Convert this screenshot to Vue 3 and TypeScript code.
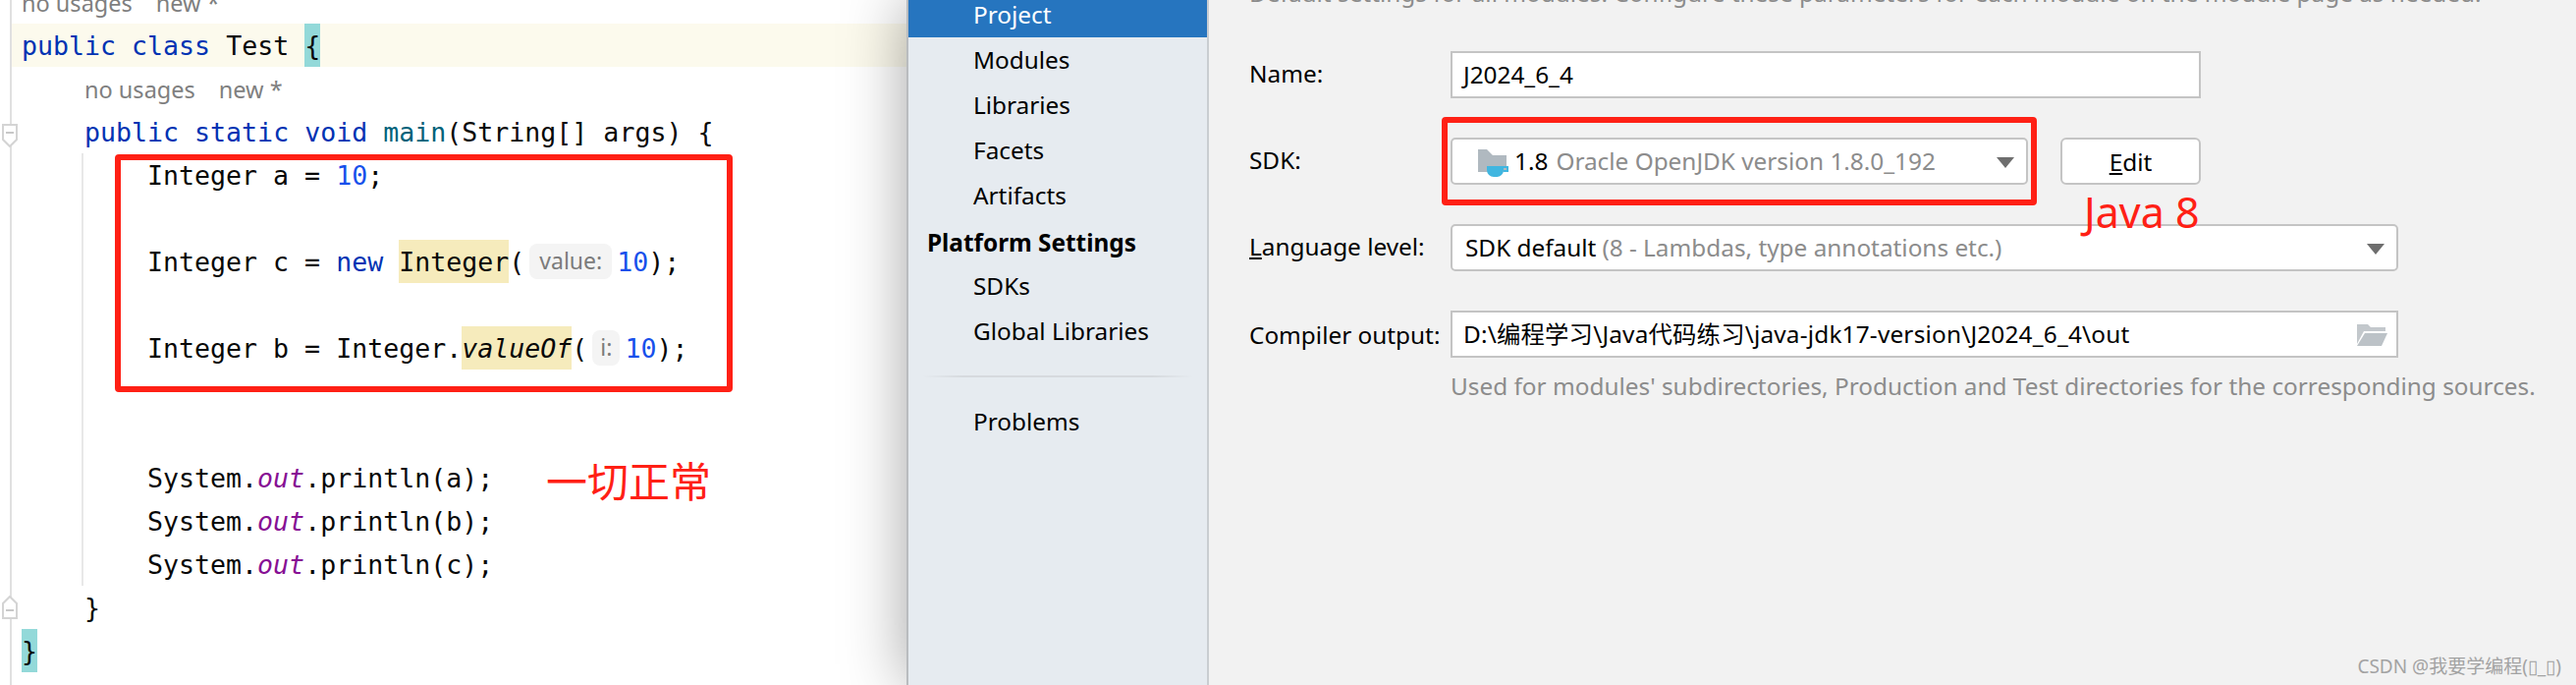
<script setup lang="ts">
const projectItems: string[] = ['Modules', 'Libraries', 'Facets', 'Artifacts']
const platformItems: string[] = ['SDKs', 'Global Libraries']
</script>

<template>
  <div class="page">
    <section class="editor">
      <div class="guide"></div>
      <div class="line hint top"><span class="i0">no usages</span><span class="new">new *</span></div>
      <div class="line caret"><span class="i0"><b class="kw">public class</b> Test <span class="brace">{</span></span></div>
      <div class="line hint"><span class="i4">no usages</span><span class="new">new *</span></div>
      <div class="line">
        <svg class="fold" width="18" height="24" viewBox="0 0 18 24"><path d="M2 1h14v15l-7 7-7-7z" fill="#fff" stroke="#d4d4d4" stroke-width="2"/><path d="M5 9h8" stroke="#c8c8c8" stroke-width="2"/></svg>
        <span class="i4"><b class="kw">public static void</b> <span class="fn">main</span>(String[] args) {</span>
      </div>
      <div class="line"><span class="i8">Integer a = <span class="num">10</span>;</span></div>
      <div class="line"></div>
      <div class="line"><span class="i8">Integer c = <b class="kw">new</b> <span class="mark">Integer</span>(<span class="inlay value">value:</span><span class="num">10</span>);</span></div>
      <div class="line"></div>
      <div class="line"><span class="i8">Integer b = Integer.<span class="mark"><i>valueOf</i></span>(<span class="inlay short">i:</span><span class="num">10</span>);</span></div>
      <div class="line"></div>
      <div class="line"></div>
      <div class="line"><span class="i8">System.<i class="field">out</i>.println(a);</span></div>
      <div class="line"><span class="i8">System.<i class="field">out</i>.println(b);</span></div>
      <div class="line"><span class="i8">System.<i class="field">out</i>.println(c);</span></div>
      <div class="line">
        <svg class="fold close" width="18" height="24" viewBox="0 0 18 24"><path d="M2 23h14V8L9 1 2 8z" fill="#fff" stroke="#d4d4d4" stroke-width="2"/><path d="M5 15h8" stroke="#c8c8c8" stroke-width="2"/></svg>
        <span class="i4">}</span>
      </div>
      <div class="line"><span class="i0"><span class="brace">}</span></span></div>
    </section>

    <section class="dialog">
      <nav class="sidebar">
        <div class="item selected">Project</div>
        <div v-for="name in projectItems" :key="name" class="item">{{ name }}</div>
        <div class="heading">Platform Settings</div>
        <div v-for="name in platformItems" :key="name" class="item">{{ name }}</div>
        <div class="separator"></div>
        <div class="item">Problems</div>
      </nav>
      <main class="content">
        <p class="desc">Default settings for all modules. Configure these parameters for each module on the module page as needed.</p>
        <div class="form">
          <label class="raised">Name:</label>
          <div class="box name">J2024_6_4</div>

          <label class="raised">SDK:</label>
          <div class="sdk-row">
            <div class="box combo sdk">
              <svg class="jdk" width="32" height="30" viewBox="0 0 32 30">
                <path d="M0 0h9l6 6h14v17H0z" fill="#b0b9c0"/>
                <path d="M9 17h17v4a7 7 0 0 1-7 7h-3a7 7 0 0 1-7-7z" fill="#40b6e0"/>
                <path d="M26 18h4v4h-4" fill="none" stroke="#40b6e0" stroke-width="2"/>
              </svg>
              <span class="ver">1.8</span><span class="muted">Oracle OpenJDK version 1.8.0_192</span>
              <svg class="arrow" width="18" height="11" viewBox="0 0 18 11"><path d="M0 0h18L9 11z" fill="#6e6e6e"/></svg>
            </div>
            <button class="edit"><u>E</u>dit</button>
          </div>

          <label class="raised"><u>L</u>anguage level:</label>
          <div class="box combo wide lang">
            <span>SDK default</span><span class="muted gap">(8 - Lambdas, type annotations etc.)</span>
            <svg class="arrow" width="18" height="11" viewBox="0 0 18 11"><path d="M0 0h18L9 11z" fill="#6e6e6e"/></svg>
          </div>

          <label>Compiler output:</label>
          <div class="box wide output">
            <span class="path">D:\编程学习\Java代码练习\java-jdk17-version\J2024_6_4\out</span>
            <svg class="open" width="31" height="22" viewBox="0 0 31 22">
              <path d="M0 0h11l3 3h15v4H7L0 20z" fill="#c3c8cc"/>
              <path d="M8 9h23l-6 13H0z" fill="#bcc2c7"/>
            </svg>
          </div>

          <div></div>
          <p class="help">Used for modules' subdirectories, Production and Test directories for the corresponding sources.</p>
        </div>
      </main>
    </section>

    <div class="redbox code-box"></div>
    <div class="redbox sdk-box"></div>
    <div class="note note-ok">一切正常</div>
    <div class="note note-java">Java 8</div>
    <div class="watermark">CSDN @我要学编程(▯_▯)</div>
  </div>
</template>

<style>
html, body { margin: 0; padding: 0; background: #fff; overflow: hidden; }
</style>

<style scoped>
.page {
  position: relative;
  display: flex;
  width: 2623px;
  height: 697px;
  overflow: hidden;
  font-family: "Noto Sans", "Noto Sans CJK SC", sans-serif;
  color: #000;
  background: #fff;
}
.editor {
  position: relative;
  flex: 0 0 923px;
  padding-left: 12px;
  margin-top: -20px;
  box-sizing: border-box;
  background: linear-gradient(to right, #fff 0 10px, #e0e0e0 10px 12px, #fff 12px);
  font-family: "DejaVu Sans Mono", monospace;
  font-size: 26.6px;
  color: #080808;
}
.guide {
  position: absolute;
  left: 83px;
  top: 176px;
  width: 2px;
  height: 440px;
  background: #e8e8e8;
}
.line {
  position: relative;
  height: 44px;
  line-height: 46px;
  white-space: pre;
}
.i0 { margin-left: 10px; }
.i4 { margin-left: 74px; }
.i8 { margin-left: 138px; }
.caret { background: #fcfaed; }
.kw { font-weight: 400; color: #0033b3; }
.fn { color: #00627a; }
.num { color: #1750eb; }
.field { color: #871094; }
.brace { background: #93d9d9; display: inline-block; height: 44px; }
.mark { background: #f6ebbc; display: inline-block; height: 44px; }
.hint {
  font-family: "Noto Sans", sans-serif;
  font-size: 23.5px;
  color: #7f7f7f;
}
.new { margin-left: 24px; }
.inlay {
  display: inline-block;
  height: 36px;
  line-height: 34px;
  margin: 0 5px;
  border-radius: 8px;
  background: #f4f4f4;
  color: #7b7b7b;
  font-family: "Noto Sans", sans-serif;
  font-size: 23px;
  vertical-align: 2px;
}
.value { padding: 0 10px; }
.short { padding: 0 8px; }
.fold { position: absolute; left: -11px; top: 14px; }
.fold.close { top: 10px; }

.dialog {
  position: relative;
  z-index: 1;
  flex: 1;
  display: flex;
  background: #f2f2f2;
  box-shadow: 0 0 60px rgba(0, 0, 0, 0.36);
  font-size: 24.35px;
}
.sidebar {
  flex: 0 0 308px;
  box-sizing: border-box;
  border-left: 2px solid #b9bcbf;
  border-right: 2px solid #c9cdd1;
  background: #e6ebf0;
  margin-top: -8px;
}
.item {
  height: 46px;
  line-height: 46px;
  padding-left: 66px;
}
.selected { background: #2675bf; color: #fff; }
.heading {
  height: 46px;
  line-height: 50px;
  padding-left: 19px;
  font-weight: 700;
}
.separator {
  height: 2px;
  margin: 22px 14px;
  background: linear-gradient(to right, #e6ebf0, #d6dade 15%, #d6dade 85%, #e6ebf0);
}
.content {
  flex: 1;
  padding-left: 41px;
  min-width: 0;
}
.desc {
  margin: -23px 0 0;
  height: 75px;
  line-height: 32px;
  color: #8c8c8c;
  white-space: nowrap;
}
.form {
  display: grid;
  grid-template-columns: 205px 965px;
  row-gap: 40px;
  align-items: center;
}
label { white-space: nowrap; }
.raised { margin-top: -3px; }
.box {
  position: relative;
  box-sizing: border-box;
  height: 48px;
  line-height: 44px;
  background: #fff;
  border: 2px solid #c4c4c4;
  padding-left: 11px;
  white-space: nowrap;
}
.name { width: 764px; }
.wide { width: 965px; }
.combo { border-radius: 5px; }
.path { letter-spacing: 0.2px; }
.sdk-row { display: flex; gap: 33px; }
.sdk { width: 588px; padding-left: 63px; }
.ver { margin-right: 8px; }
.muted { color: #8c8c8c; }
.gap { margin-left: 6px; }
.lang { padding-left: 13px; }
.jdk { position: absolute; left: 26px; top: 10px; }
.arrow { position: absolute; right: 12px; top: 18px; }
.open { position: absolute; right: 9px; top: 12px; }
.edit {
  box-sizing: border-box;
  width: 143px;
  height: 48px;
  padding: 0;
  background: #fff;
  border: 2px solid #c4c4c4;
  border-radius: 6px;
  font: inherit;
  color: #000;
}
.help {
  margin: -27px 0 0;
  height: 32px;
  line-height: 32px;
  color: #8c8c8c;
  white-space: nowrap;
}
.redbox {
  position: absolute;
  box-sizing: border-box;
  border: 6px solid #ff2015;
  border-radius: 4px;
  z-index: 2;
}
.code-box { left: 117px; top: 157px; width: 629px; height: 242px; }
.sdk-box { left: 1468px; top: 119px; width: 606px; height: 90px; }
.note {
  position: absolute;
  z-index: 2;
  color: #ff2015;
  font-size: 42px;
  line-height: 50px;
  white-space: nowrap;
}
.note-ok { left: 556px; top: 463px; font-family: "Noto Sans CJK SC", sans-serif; }
.note-java { left: 2122px; top: 191px; font-size: 43px; }
.watermark {
  position: absolute;
  z-index: 2;
  right: 15px;
  top: 665px;
  font-size: 19px;
  line-height: 26px;
  color: #a3a3a3;
  white-space: nowrap;
}
</style>
